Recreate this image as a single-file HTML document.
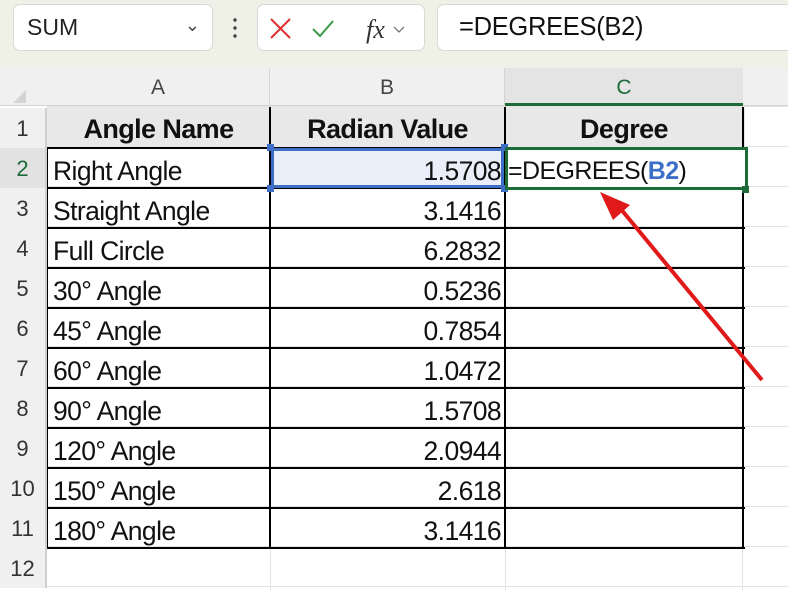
<!DOCTYPE html>
<html><head><style>
body{margin:0;width:788px;height:590px;overflow:hidden;background:#fff;font-family:"Liberation Sans",sans-serif;position:relative}
.tb{position:absolute;left:0;top:0;width:788px;height:68px;background:#eff1e6}
.box{position:absolute;top:4px;height:47px;background:#fff;border:1px solid #d8d8d8;border-radius:7px;box-sizing:border-box}
.ch{position:absolute;top:68px;height:38px;background:#f0f0f0;border-bottom:1px solid #d4d4d4;font-size:21px;color:#444;text-align:center;line-height:40px;box-sizing:border-box}
.rh{position:absolute;left:0;width:47px;height:40px;background:#f0f0f0;border-right:2px solid #cfcfcf;color:#333;font-size:22px;text-align:center;line-height:42px;box-sizing:border-box}
.c{position:absolute;height:40px;line-height:42px;font-size:26.5px;color:#111;box-sizing:border-box;white-space:nowrap;letter-spacing:-0.6px}
</style></head><body>
<div class="tb"></div>
<div class="box" style="left:13px;width:200px"><span style="position:absolute;left:13px;top:9px;font-size:23px;color:#222">SUM</span><span style="position:absolute;right:12px;top:10px;font-size:18px;color:#444">&#8964;</span></div>
<div style="position:absolute;left:233px;top:16px;width:4px;height:22px;background:radial-gradient(circle,#444 1.5px,transparent 2px) 0 0/4px 8px"></div>
<div class="box" style="left:257px;width:168px">
<svg width="168" height="47" style="position:absolute;left:0;top:0"><path d="M13 14 L32 33 M32 14 L13 33" stroke="#e03030" stroke-width="2" fill="none"/><path d="M55 24 L62 31 L75 16" stroke="#3a9a4a" stroke-width="2" fill="none"/><text x="108" y="33" font-family="Liberation Serif" font-style="italic" font-size="26" fill="#333">fx</text><path d="M136 22 L141 27 L146 22" stroke="#777" stroke-width="1.3" fill="none"/></svg></div>
<div class="box" style="left:437px;width:360px"><span style="position:absolute;left:21px;top:8px;font-size:25.5px;color:#111;letter-spacing:-0.3px">=DEGREES(B2)</span></div>

<div class="ch" style="left:0;width:47px"><svg width="47" height="38"><path d="M13 35 L26 22 L26 35Z" fill="#d4d4d4"/></svg></div>
<div class="ch" style="left:47px;width:223px;border-right:1px solid #d4d4d4">A</div>
<div class="ch" style="left:270px;width:235px;border-right:1px solid #d4d4d4">B</div>
<div class="ch" style="left:505px;width:238px;border-bottom:3px solid #1e6b3a;color:#1e6b3a;background:#e4e4e4">C</div>
<div class="ch" style="left:743px;width:45px"></div>

<div style="position:absolute;left:47px;top:106px;width:741px;height:484px;background:linear-gradient(#e2e2e2 1px,transparent 1px) 0 0/100% 40px"></div>
<div style="position:absolute;left:270px;top:548px;width:1px;height:42px;background:#e2e2e2"></div>
<div style="position:absolute;left:505px;top:548px;width:1px;height:42px;background:#e2e2e2"></div>
<div style="position:absolute;left:742px;top:106px;width:1px;height:484px;background:#e2e2e2"></div>

<div style="position:absolute;left:47px;top:107px;width:698px;height:41px;background:#e8e8e8"></div>
<svg width="788" height="590" style="position:absolute;left:0;top:0">
<g stroke="#000" stroke-width="2">
<path d="M47 148 H745 M47 188 H745 M47 228 H745 M47 268 H745 M47 308 H745 M47 348 H745 M47 388 H745 M47 428 H745 M47 468 H745 M47 508 H745 M47 548 H745"/>
<path d="M47 148 V548 M270 107 V548 M505 107 V548 M743 107 V548"/>
</g></svg>
<div class="rh" style="top:108px">1</div>
<div class="rh" style="top:148px;color:#1e6b3a;background:#e2e2e2">2</div>
<div class="rh" style="top:188px">3</div><div class="rh" style="top:228px">4</div><div class="rh" style="top:268px">5</div><div class="rh" style="top:308px">6</div><div class="rh" style="top:348px">7</div><div class="rh" style="top:388px">8</div><div class="rh" style="top:428px">9</div><div class="rh" style="top:468px">10</div><div class="rh" style="top:508px">11</div><div class="rh" style="top:548px">12</div>

<div class="c" style="left:47px;top:108px;width:223px;text-align:center;font-weight:bold;font-size:27px">Angle Name</div>
<div class="c" style="left:270px;top:108px;width:235px;text-align:center;font-weight:bold;font-size:27px">Radian Value</div>
<div class="c" style="left:505px;top:108px;width:238px;text-align:center;font-weight:bold;font-size:27px">Degree</div>

<div style="position:absolute;left:271px;top:148px;width:233px;height:40px;background:#e9eef8;border:3px solid #3e6fc8;box-sizing:border-box"></div>
<div style="position:absolute;left:267px;top:144px;width:7px;height:7px;background:#3e6fc8"></div>
<div style="position:absolute;left:501px;top:144px;width:7px;height:7px;background:#3e6fc8"></div>
<div style="position:absolute;left:267px;top:185px;width:7px;height:7px;background:#3e6fc8"></div>
<div style="position:absolute;left:501px;top:185px;width:7px;height:7px;background:#3e6fc8"></div>
<div style="position:absolute;left:505px;top:147px;width:243px;height:43px;border:3px solid #1e6b3a;box-sizing:border-box;background:#fff"></div>
<div style="position:absolute;left:742px;top:186px;width:7px;height:7px;background:#1e6b3a"></div>

<div class="c" style="left:53px;top:150px">Right Angle</div><div class="c" style="left:270px;top:150px;width:231px;text-align:right">1.5708</div>
<div class="c" style="left:508px;top:150px;font-size:25px">=DEGREES(<b style="color:#3e6fc8">B2</b>)</div>
<div class="c" style="left:53px;top:190px">Straight Angle</div><div class="c" style="left:270px;top:190px;width:231px;text-align:right">3.1416</div>
<div class="c" style="left:53px;top:230px">Full Circle</div><div class="c" style="left:270px;top:230px;width:231px;text-align:right">6.2832</div>
<div class="c" style="left:53px;top:270px">30° Angle</div><div class="c" style="left:270px;top:270px;width:231px;text-align:right">0.5236</div>
<div class="c" style="left:53px;top:310px">45° Angle</div><div class="c" style="left:270px;top:310px;width:231px;text-align:right">0.7854</div>
<div class="c" style="left:53px;top:350px">60° Angle</div><div class="c" style="left:270px;top:350px;width:231px;text-align:right">1.0472</div>
<div class="c" style="left:53px;top:390px">90° Angle</div><div class="c" style="left:270px;top:390px;width:231px;text-align:right">1.5708</div>
<div class="c" style="left:53px;top:430px">120° Angle</div><div class="c" style="left:270px;top:430px;width:231px;text-align:right">2.0944</div>
<div class="c" style="left:53px;top:470px">150° Angle</div><div class="c" style="left:270px;top:470px;width:231px;text-align:right">2.618</div>
<div class="c" style="left:53px;top:510px">180° Angle</div><div class="c" style="left:270px;top:510px;width:231px;text-align:right">3.1416</div>

<svg width="788" height="590" style="position:absolute;left:0;top:0">
<line x1="762" y1="380" x2="620" y2="208" stroke="#e01a1a" stroke-width="4"/>
<path d="M600 192 L630 205 L613 220Z" fill="#e01a1a"/>
</svg>
</body></html>
